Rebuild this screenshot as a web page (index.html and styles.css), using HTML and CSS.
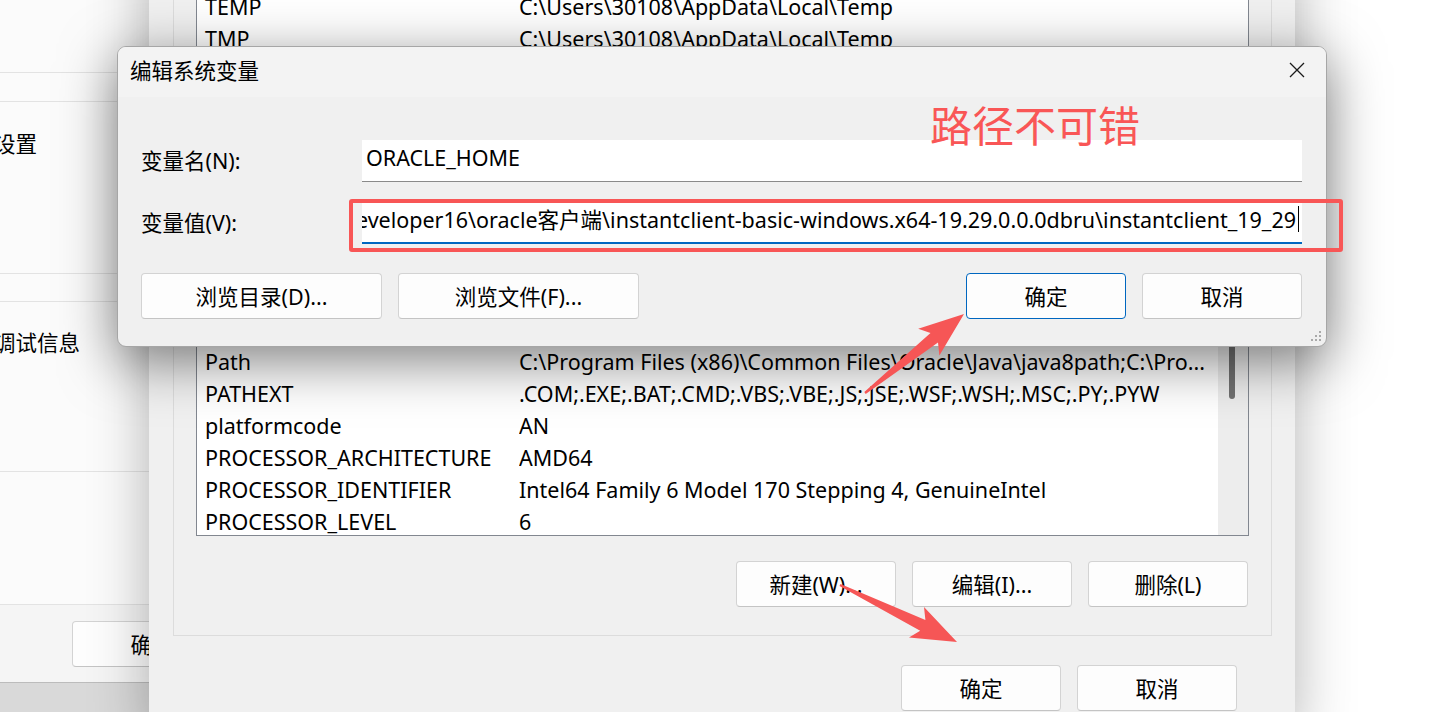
FILE: index.html
```html
<!DOCTYPE html>
<html lang="zh-CN">
<head>
  <meta charset="UTF-8">
  <title>编辑系统变量</title>
  <link rel="stylesheet" href="styles.css">
</head>
<body>

  <!-- janela de trás (propriedades do sistema) -->
  <div class="janela-esq">
    <div class="esq-bloco esq-topo"></div>
    <div class="esq-bloco esq-faixa"></div>
    <div class="esq-bloco esq-secao s1"><span class="esq-texto">设置</span></div>
    <div class="esq-bloco esq-faixa f2"></div>
    <div class="esq-bloco esq-secao s2"><span class="esq-texto">调试信息</span></div>
    <div class="esq-bloco esq-secao s3"></div>
    <div class="esq-rodape"><button class="btn">确定</button></div>
    <div class="esq-resto"></div>
  </div>

  <!-- janela de variaveis de ambiente -->
  <div class="janela-env">
    <div class="grupo grupo-usuario">
      <div class="lista lista-usuario">
        <div class="linhas">
          <div class="linha"><span>Path</span><span>C:\Users\30108\AppData\Local\Microsoft\WindowsApps;</span></div>
          <div class="linha"><span>TEMP</span><span>C:\Users\30108\AppData\Local\Temp</span></div>
          <div class="linha"><span>TMP</span><span>C:\Users\30108\AppData\Local\Temp</span></div>
        </div>
      </div>
      <div class="botoes-grupo">
        <button class="btn">新建(N)...</button>
        <button class="btn">编辑(E)...</button>
        <button class="btn">删除(D)</button>
      </div>
    </div>

    <div class="grupo grupo-sistema">
      <div class="grupo-titulo">系统变量(S)</div>
      <div class="lista lista-sistema">
        <div class="linhas">
          <div class="linha"><span>NUMBER_OF_PROCESSORS</span><span>28</span></div>
          <div class="linha"><span>ORACLE_HOME</span><span>D:\developer16</span></div>
          <div class="linha"><span>OS</span><span>Windows_NT</span></div>
          <div class="linha"><span>Path</span><span>C:\Program Files (x86)\Common Files\Oracle\Java\java8path;C:\Pro...</span></div>
          <div class="linha"><span>PATHEXT</span><span>.COM;.EXE;.BAT;.CMD;.VBS;.VBE;.JS;.JSE;.WSF;.WSH;.MSC;.PY;.PYW</span></div>
          <div class="linha"><span>platformcode</span><span>AN</span></div>
          <div class="linha"><span>PROCESSOR_ARCHITECTURE</span><span>AMD64</span></div>
          <div class="linha"><span>PROCESSOR_IDENTIFIER</span><span>Intel64 Family 6 Model 170 Stepping 4, GenuineIntel</span></div>
          <div class="linha"><span>PROCESSOR_LEVEL</span><span>6</span></div>
        </div>
        <div class="barra"><div class="barra-polegar"></div></div>
      </div>
      <div class="botoes-grupo">
        <button class="btn">新建(W)...</button>
        <button class="btn">编辑(I)...</button>
        <button class="btn">删除(L)</button>
      </div>
    </div>

    <div class="botoes-rodape">
      <button class="btn">确定</button>
      <button class="btn">取消</button>
    </div>
  </div>

  <!-- dialogo editar -->
  <div class="dialogo">
    <div class="dlg-titulo">
      <span>编辑系统变量</span>
      <span class="dlg-fechar">
        <svg width="16" height="16" viewBox="0 0 16 16"><path d="M1 1L15 15M15 1L1 15" stroke="#1a1a1a" stroke-width="1.3" fill="none"/></svg>
      </span>
    </div>
    <div class="dlg-corpo">
      <div class="campo">
        <label class="campo-rotulo">变量名(N):</label>
        <div class="entrada"><span>ORACLE_HOME</span></div>
      </div>
      <div class="campo">
        <label class="campo-rotulo">变量值(V):</label>
        <div class="entrada entrada-ativa"><span>D:\developer16\oracle客户端\instantclient-basic-windows.x64-19.29.0.0.0dbru\instantclient_19_29</span><i class="cursor"></i></div>
      </div>
      <div class="dlg-botoes">
        <button class="btn largo">浏览目录(D)...</button>
        <button class="btn largo">浏览文件(F)...</button>
        <span class="espaco"></span>
        <button class="btn primario">确定</button>
        <button class="btn">取消</button>
      </div>
    </div>
    <svg class="alca" width="12" height="12" viewBox="0 0 12 12" fill="#a9a9a9">
      <rect x="9" y="1" width="2" height="2"/><rect x="9" y="5" width="2" height="2"/><rect x="5" y="5" width="2" height="2"/>
      <rect x="9" y="9" width="2" height="2"/><rect x="5" y="9" width="2" height="2"/><rect x="1" y="9" width="2" height="2"/>
    </svg>
  </div>

  <!-- anotacoes em vermelho -->
  <div class="nota-texto">路径不可错</div>
  <div class="nota-caixa"></div>
  <svg class="setas" width="1453" height="712" viewBox="0 0 1453 712">
    <polygon fill="#f65656" points="864.3,392.1 930.5,333.1 918.2,328.8 964,314 939.4,355.4 938,342.4 865.7,393.9"/>
    <polygon fill="#f65656" points="839.5,586.1 920.2,630.7 909,637.6 957,642 924,607 925.4,620 840.5,583.9"/>
  </svg>

</body>
</html>
```

FILE: styles.css
```css
* {
  box-sizing: border-box;
}

body {
  margin: 0;
  width: 1453px;
  height: 712px;
  overflow: hidden;
  position: relative;
  background: #fff;
  font-family: "Noto Sans", "Noto Sans CJK SC", sans-serif;
  font-size: 21.5px;
  color: #000;
}

button {
  font: inherit;
  color: inherit;
}

.btn {
  width: 160px;
  height: 46px;
  padding: 0 0 2px;
  background: #fdfdfd;
  border: 1px solid #d3d3d3;
  border-bottom-color: #c4c4c4;
  border-radius: 4px;
  flex-shrink: 0;
}

.btn.largo {
  width: 241px;
}

.btn.primario {
  border-color: #0067c0;
}

/* janela da esquerda */
.janela-esq {
  position: absolute;
  left: 0;
  top: 0;
  width: 300px;
  height: 712px;
  background: #fbfbfb;
  display: flex;
  flex-direction: column;
}

.esq-bloco {
  border-bottom: 1px solid #e3e3e3;
  flex-shrink: 0;
}

.esq-topo { height: 73px; }
.esq-faixa { height: 29px; }
.esq-faixa.f2 { height: 28px; }

.esq-secao {
  padding-top: 27px;
}

.esq-secao.s1 { height: 172px; }
.esq-secao.s2 { height: 170px; padding-top: 26px; }
.esq-secao.s3 { height: 133px; }

.esq-texto {
  display: block;
  margin-left: -6px;
  line-height: 30px;
}

.esq-rodape {
  height: 78px;
  background: #f5f5f5;
  border-bottom: 1px solid #bcbcbc;
  padding: 16px 0 0 72px;
}

.esq-resto {
  flex: 1;
  background: #d9d9d9;
}

/* janela do meio */
.janela-env {
  position: absolute;
  left: 149px;
  top: -60px;
  width: 1146px;
  height: 800px;
  background: #f0f0f0;
  padding: 0 23px 0 24px;
  box-shadow: 0 0 55px rgba(0, 0, 0, 0.3);
}

.grupo {
  border: 1px solid #dcdcdc;
  padding: 8px 22px 18px 22px;
}

.grupo-usuario {
  margin-top: 10px;
}

.grupo-sistema {
  margin-top: 20px;
  padding-top: 26px;
  padding-bottom: 28px;
}

.grupo-titulo {
  height: 41px;
}

.lista {
  background: #fff;
  border: 1px solid #828790;
  display: flex;
}

.lista-usuario { height: 122px; }
.lista-sistema { height: 286px; }

.linhas {
  flex: 1;
  overflow: hidden;
  min-width: 0;
}

.linha {
  display: grid;
  grid-template-columns: 322px 1fr;
  height: 32px;
  padding-bottom: 4px;
  align-items: center;
  white-space: nowrap;
}

.linha span {
  overflow: hidden;
}

.linha span:first-child {
  padding-left: 8px;
}

.barra {
  width: 30px;
  background: #ededed;
}

.barra-polegar {
  width: 6px;
  height: 138px;
  margin: 10px 0 0 11px;
  background: #717171;
  border-radius: 3px;
}

.botoes-grupo {
  display: flex;
  justify-content: flex-end;
  gap: 16px;
  margin-top: 16px;
  padding-right: 1px;
}

.grupo-sistema .botoes-grupo {
  margin-top: 25px;
}

.botoes-rodape {
  display: flex;
  justify-content: flex-end;
  gap: 16px;
  margin-top: 29px;
  padding-right: 35px;
}

/* dialogo */
.dialogo {
  position: absolute;
  left: 117px;
  top: 46px;
  width: 1210px;
  height: 301px;
  background: #f0f0f0;
  border: 1px solid #a6a6a6;
  border-radius: 9px;
  overflow: hidden;
  box-shadow: 0 14px 55px rgba(0, 0, 0, 0.5);
}

.dlg-titulo {
  height: 50px;
  background: #f3f3f3;
  display: flex;
  align-items: center;
  justify-content: space-between;
  padding: 0 0 5px 12px;
}

.dlg-fechar {
  width: 58px;
  display: flex;
  justify-content: center;
}

.dlg-fechar svg {
  display: block;
}

.dlg-corpo {
  padding: 43px 24px 0 23px;
}

.campo {
  display: flex;
  align-items: center;
  margin-bottom: 20px;
}

.campo-rotulo {
  width: 221px;
  flex-shrink: 0;
  padding-bottom: 3px;
}

.entrada {
  flex: 1;
  min-width: 0;
  height: 42px;
  background: #fff;
  border-bottom: 1px solid #8a8a8a;
  padding: 0 3px 7px 4px;
  display: flex;
  align-items: center;
  white-space: nowrap;
  overflow: hidden;
}

.entrada-ativa {
  justify-content: flex-end;
  border-bottom: 2px solid #0067c0;
  padding-left: 0;
}

.cursor {
  flex-shrink: 0;
  width: 1px;
  height: 26px;
  margin-left: 2px;
  background: #000;
}

.dlg-botoes {
  display: flex;
  gap: 16px;
  margin-top: 29px;
}

.espaco {
  flex: 1;
}

.alca {
  position: absolute;
  right: 4px;
  bottom: 4px;
}

/* anotacoes */
.nota-texto {
  position: absolute;
  left: 930px;
  top: 103px;
  font-family: "Noto Sans CJK SC", sans-serif;
  font-size: 42px;
  line-height: 1;
  color: #f95656;
}

.nota-caixa {
  position: absolute;
  left: 349px;
  top: 199px;
  width: 994px;
  height: 53px;
  border: 4px solid #f85656;
  border-radius: 3px;
}

.setas {
  position: absolute;
  left: 0;
  top: 0;
  pointer-events: none;
}
```
